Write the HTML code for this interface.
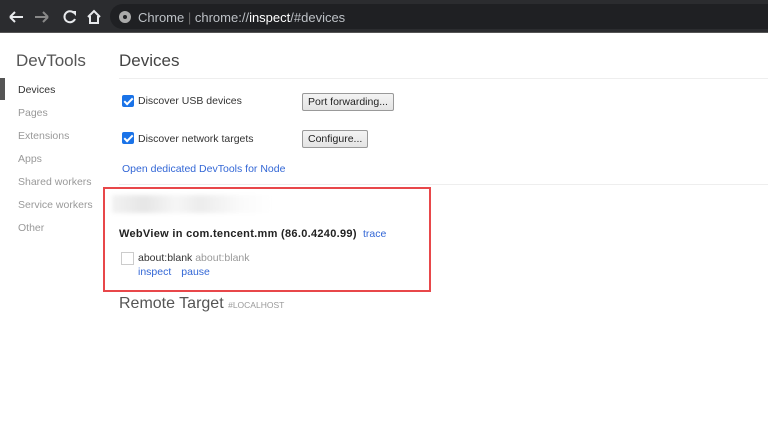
<!DOCTYPE html>
<html><head><style>
*{margin:0;padding:0;box-sizing:border-box}
body{width:768px;height:426px;background:#fff;font-family:"Liberation Sans",Arial,sans-serif;position:relative;overflow:hidden;color:#333}
.a{position:absolute;white-space:nowrap}
.tb{position:absolute;left:0;top:0;width:768px;height:33px;background:#2b2c2f;border-bottom:1px solid #555}
.pill{position:absolute;left:110px;top:4px;width:680px;height:25px;border-radius:13px;background:#1f2023}
.side{font-size:10.5px;color:#999}
.btn{position:absolute;border:1px solid #999;border-radius:2px;background:linear-gradient(#f4f4f4,#e4e4e4);font-size:10.5px;color:#222;padding:2px 5px;height:18px;line-height:13px}
.cb{position:absolute;width:12px;height:12px;border-radius:2px;background:#1a73e8}
.cb:after{content:"";position:absolute;left:4px;top:1px;width:3px;height:7px;border:solid #fff;border-width:0 2px 2px 0;transform:rotate(45deg)}
.lnk{color:#3367d6}
.t{font-size:10.5px}
</style></head><body>
<div class="tb"></div>
<div class="pill"></div>
<svg class="a" style="left:8px;top:9px" width="100" height="16" viewBox="0 0 100 16">
<path d="M2 8H15M2 8L7 3M2 8L7 13" stroke="#e8eaed" stroke-width="2" fill="none"/>
<path d="M27 8H40M40 8L35 3M40 8L35 13" stroke="#888" stroke-width="2" fill="none"/>
<path d="M66 4A5.5 5.5 0 1 0 67 10" stroke="#e8eaed" stroke-width="2" fill="none"/><path d="M63 2L68 2L68 7Z" fill="#e8eaed"/>
<path d="M80 8L86 2L92 8M82 7V14H90V7" stroke="#e8eaed" stroke-width="2" fill="none"/>
</svg>
<div class="a" style="left:119px;top:11px;width:12px;height:12px;border-radius:50%;background:#aaa"></div>
<div class="a" style="left:123px;top:15px;width:4px;height:4px;border-radius:50%;background:#1f2023"></div>
<div class="a" style="left:138px;top:10px;font-size:13px;color:#bdc1c6">Chrome <span style="color:#666">|</span> chrome:<span>//</span><span style="color:#fff">inspect</span>/#devices</div>

<div class="a" style="left:16px;top:51px;font-size:17px;color:#555">DevTools</div>
<div class="a" style="left:0;top:78px;width:5px;height:22px;background:#555"></div>
<div class="a side" style="left:18px;top:84px;color:#333">Devices</div>
<div class="a side" style="left:18px;top:107px">Pages</div>
<div class="a side" style="left:18px;top:130px">Extensions</div>
<div class="a side" style="left:18px;top:153px">Apps</div>
<div class="a side" style="left:18px;top:176px">Shared workers</div>
<div class="a side" style="left:18px;top:199px">Service workers</div>
<div class="a side" style="left:18px;top:222px">Other</div>

<div class="a" style="left:119px;top:51px;font-size:17px;color:#444">Devices</div>
<div class="a" style="left:119px;top:78px;width:649px;height:1px;background:#eee"></div>
<div class="cb" style="left:122px;top:95px"></div>
<div class="a t" style="left:138px;top:95px">Discover USB devices</div>
<div class="btn" style="left:302px;top:93px">Port forwarding...</div>
<div class="cb" style="left:122px;top:132px"></div>
<div class="a t" style="left:138px;top:133px">Discover network targets</div>
<div class="btn" style="left:302px;top:130px">Configure...</div>
<div class="a lnk t" style="left:122px;top:163px">Open dedicated DevTools for Node</div>
<div class="a" style="left:119px;top:184px;width:649px;height:1px;background:#eee"></div>

<div class="a" style="left:112px;top:195px;width:160px;height:18px;background:linear-gradient(90deg,#f2f2f2,#e6e6e6 20%,#f6f6f6 40%,#ececec 55%,#fafafa 80%,#fff);filter:blur(2px)"></div>
<div class="a" style="left:119px;top:228px;font-size:11px;font-weight:bold;color:#222;letter-spacing:0.3px">WebView in com.tencent.mm (86.0.4240.99)</div>
<div class="a lnk t" style="left:363px;top:228px">trace</div>
<div class="a" style="left:121px;top:252px;width:13px;height:13px;border:1px solid #ccc"></div>
<div class="a t" style="left:138px;top:252px;color:#333">about:blank <span style="color:#999">about:blank</span></div>
<div class="a lnk t" style="left:138px;top:266px">inspect<span style="margin-left:10px">pause</span></div>
<div class="a" style="left:103px;top:187px;width:328px;height:105px;border:2px solid #e8474a"></div>

<div class="a" style="left:119px;top:295px;font-size:16px;color:#555">Remote Target <span style="font-size:8.5px;color:#999">#LOCALHOST</span></div>
</body></html>
